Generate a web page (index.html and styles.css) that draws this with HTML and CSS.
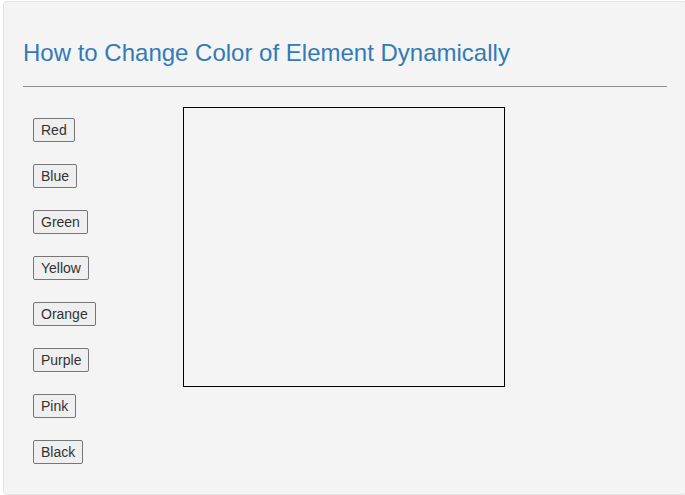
FILE: index.html
```html
<!DOCTYPE html>
<html>
<head>
<meta charset="utf-8">
<link rel="stylesheet" href="styles.css">
</head>
<body>
<div class="well">
  <h2 class="title">How to Change Color of Element Dynamically</h2>
  <hr class="rule">
  <div class="row">
    <div class="buttons">
      <button class="btn">Red</button>
      <button class="btn">Blue</button>
      <button class="btn">Green</button>
      <button class="btn">Yellow</button>
      <button class="btn">Orange</button>
      <button class="btn">Purple</button>
      <button class="btn">Pink</button>
      <button class="btn">Black</button>
    </div>
    <div class="box"></div>
  </div>
</div>
</body>
</html>
```
FILE: styles.css
```css
html, body {
  margin: 0;
  padding: 0;
  background: #fff;
  overflow: hidden;
}
body {
  font-family: "Liberation Sans", Arial, sans-serif;
  font-size: 14px;
  color: #333;
}
.well {
  box-sizing: border-box;
  margin: 1px 0 0 3px;
  width: 684px;
  height: 494px;
  padding: 19px;
  background: #f4f4f4;
  border: 1px solid #e3e3e3;
  border-radius: 4px;
}
.title {
  margin: 19px 0 20px;
  font-size: 24px;
  font-weight: normal;
  line-height: 26px;
  color: #337ab7;
}
.rule {
  margin: 0 0 20px;
  border: 0;
  border-top: 1px solid #8c8c8c;
  height: 0;
}
.row {
  display: flex;
}
.buttons {
  width: 150px;
  padding: 11px 0 0 10px;
  display: flex;
  flex-direction: column;
  align-items: flex-start;
  gap: 22px;
}
.btn {
  font-family: "Liberation Sans", Arial, sans-serif;
  font-size: 14px;
  line-height: 20px;
  padding: 1px 7px;
  color: #333;
  background: #efefef;
  border: 1px solid #767676;
  border-radius: 2px;
}
.box {
  width: 320px;
  height: 278px;
  border: 1px solid #000;
}
```
